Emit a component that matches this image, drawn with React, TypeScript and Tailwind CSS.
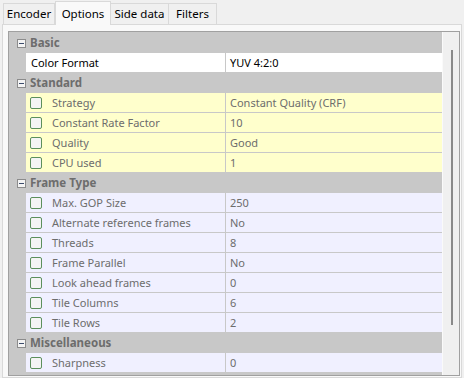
import React from 'react';

type Row =
  | { kind: 'cat'; label: string }
  | { kind: 'prop'; label: string; value: string; tone: 'white' | 'yellow' | 'blue'; check?: boolean };

const rows: Row[] = [
  { kind: 'cat', label: 'Basic' },
  { kind: 'prop', label: 'Color Format', value: 'YUV 4:2:0', tone: 'white' },
  { kind: 'cat', label: 'Standard' },
  { kind: 'prop', label: 'Strategy', value: 'Constant Quality (CRF)', tone: 'yellow', check: true },
  { kind: 'prop', label: 'Constant Rate Factor', value: '10', tone: 'yellow', check: true },
  { kind: 'prop', label: 'Quality', value: 'Good', tone: 'yellow', check: true },
  { kind: 'prop', label: 'CPU used', value: '1', tone: 'yellow', check: true },
  { kind: 'cat', label: 'Frame Type' },
  { kind: 'prop', label: 'Max. GOP Size', value: '250', tone: 'blue', check: true },
  { kind: 'prop', label: 'Alternate reference frames', value: 'No', tone: 'blue', check: true },
  { kind: 'prop', label: 'Threads', value: '8', tone: 'blue', check: true },
  { kind: 'prop', label: 'Frame Parallel', value: 'No', tone: 'blue', check: true },
  { kind: 'prop', label: 'Look ahead frames', value: '0', tone: 'blue', check: true },
  { kind: 'prop', label: 'Tile Columns', value: '6', tone: 'blue', check: true },
  { kind: 'prop', label: 'Tile Rows', value: '2', tone: 'blue', check: true },
  { kind: 'cat', label: 'Miscellaneous' },
  { kind: 'prop', label: 'Sharpness', value: '0', tone: 'blue', check: true },
];

const tabs = [
  { label: 'Encoder', w: 'w-[52px]' },
  { label: 'Options', w: 'w-[56px]' },
  { label: 'Side data', w: 'w-[58px]' },
  { label: 'Filters', w: 'w-[48px]' },
];

const toneBg = {
  white: 'bg-white text-black',
  yellow: 'bg-[#ffffcc] text-[#6d6d6d]',
  blue: 'bg-[#f0f0ff] text-[#6d6d6d]',
};

const Checkbox = () => (
  <span className="w-[12px] h-[12px] rounded-[2px] border border-[#5c8f5c] bg-[#f4f4f4] shrink-0" />
);

const MinusBox = () => (
  <span className="w-[9px] h-[9px] border border-[#8c8c8c] bg-[#f4f4f4] flex items-center justify-center shrink-0">
    <span className="w-[5px] h-px bg-[#3c4c6c]" />
  </span>
);

export default function App() {
  return (
    <div
      className="w-[464px] h-[378px] bg-[#f0f0f0] flex flex-col text-[11px] leading-none"
      style={{ fontFamily: '"Noto Sans", "Open Sans", sans-serif' }}
    >
      {/* Tab strip */}
      <div className="h-[24px] flex items-end pl-[3px] relative z-10 text-[11.5px]">
        {tabs.map((t) =>
          t.label === 'Options' ? (
            <div
              key={t.label}
              className={`${t.w} h-[24px] -mb-px flex items-center justify-center bg-[#f9f9f9] border border-b-0 border-[#d9d9d9] text-black`}
            >
              {t.label}
            </div>
          ) : (
            <div
              key={t.label}
              className={`${t.w} h-[21px] flex items-center justify-center border border-b-0 border-l-0 first:border-l border-[#d9d9d9] bg-[#f0f0f0] text-black`}
            >
              {t.label}
            </div>
          )
        )}
      </div>

      {/* Tab page */}
      <div className="flex-1 ml-[2px] mr-[2px] bg-[#f9f9f9] border border-[#d9d9d9] pt-[6px] pl-[5px] pr-[1px] pb-[1px] flex">
        <div className="flex-1 border border-[#a0a0a0] bg-[#f0f0f0] flex">
          {/* Grid */}
          <div className="w-[433px] flex flex-col bg-[#c8c8c8] pt-px">
            {rows.map((r, i) =>
              r.kind === 'cat' ? (
                <div key={i} className="h-[20px] flex items-center bg-[#c8c8c8]">
                  <span className="w-[21px] flex justify-center pl-[3px]">
                    <MinusBox />
                  </span>
                  <span className="font-bold text-[#6d6d6d] text-[11.5px]">{r.label}</span>
                </div>
              ) : (
                <div key={i} className="h-[20px] flex">
                  <div className="w-[17px] bg-[#c8c8c8]" />
                  <div className={`flex-1 flex border-b border-[#c8c8c8] ${toneBg[r.tone]}`}>
                    <div className="w-[200px] flex items-center border-r border-[#c8c8c8]">
                      {r.check ? (
                        <>
                          <span className="pl-[4px] flex">
                            <Checkbox />
                          </span>
                          <span className="pl-[10px]">{r.label}</span>
                        </>
                      ) : (
                        <span className="pl-[5px]">{r.label}</span>
                      )}
                    </div>
                    <div className="flex-1 flex items-center pl-[4px]">{r.value}</div>
                  </div>
                </div>
              )
            )}
          </div>
          {/* Scrollbar */}
          <div className="flex-1 border-l border-[#fafafa] bg-[#f0f0f0] flex justify-center pt-[18px]">
            <div className="w-[2px] h-[275px] bg-[#8a8a8a] ml-[1px]" />
          </div>
        </div>
      </div>
    </div>
  );
}
